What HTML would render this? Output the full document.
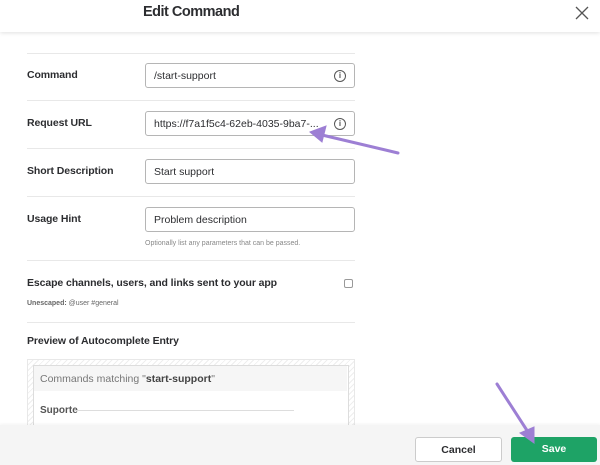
<!DOCTYPE html><html><head><style>
body{margin:0;width:600px;height:465px;overflow:hidden;background:#fff;font-family:"Liberation Sans",sans-serif;color:#2c2d30;position:relative}
.a{position:absolute}
.hdr{left:0;top:0;width:600px;height:32px;background:#fff;box-shadow:0 1px 4px rgba(0,0,0,.12)}
.line{left:27px;width:328px;height:1px;background:#e8e8e8}
.lbl{left:27px;font-size:10.5px;font-weight:bold;color:#2c2d30;letter-spacing:-0.1px}
.inp{left:145px;border:1px solid #b5b5b5;border-radius:3px;font-size:10.5px;line-height:24px;padding-left:8px;box-sizing:border-box;width:210px;height:25px}
.info{position:absolute;right:8px;top:6px;width:10px;height:10px;border:1px solid #555;border-radius:50%;font-size:8px;line-height:10px;text-align:center;font-weight:bold;color:#555}
.btn{top:437px;height:25px;border-radius:3px;font-size:10.5px;font-weight:bold;text-align:center;line-height:25px;box-sizing:border-box}
</style></head><body>
<div class="a line" style="top:53px"></div>
<div class="a lbl" style="top:69px">Command</div>
<div class="a inp" style="top:63px">/start-support<div class="info">i</div></div>
<div class="a line" style="top:100px"></div>
<div class="a lbl" style="top:117px">Request URL</div>
<div class="a inp" style="top:111px">https://f7a1f5c4-62eb-4035-9ba7-...<div class="info">i</div></div>
<div class="a line" style="top:148px"></div>
<div class="a lbl" style="top:165px">Short Description</div>
<div class="a inp" style="top:159px">Start support</div>
<div class="a line" style="top:196px"></div>
<div class="a lbl" style="top:213px">Usage Hint</div>
<div class="a inp" style="top:207px">Problem description</div>
<div class="a" style="left:145px;top:240px;font-size:7px;color:#888">Optionally list any parameters that can be passed.</div>
<div class="a line" style="top:260px"></div>
<div class="a lbl" style="top:277px">Escape channels, users, and links sent to your app</div>
<div class="a" style="left:344px;top:279px;width:7px;height:7px;border:1px solid #999;border-radius:2px"></div>
<div class="a" style="left:27px;top:300px;font-size:7px;color:#666"><b>Unescaped:</b> @user #general</div>
<div class="a line" style="top:322px"></div>
<div class="a lbl" style="top:335px">Preview of Autocomplete Entry</div>
<div class="a" style="left:27px;top:359px;width:326px;height:70px;border:1px solid #e8e8e8;background:repeating-linear-gradient(135deg,#fff 0 3px,#eee 3px 4px)"></div>
<div class="a" style="left:33px;top:365px;width:314px;height:70px;border:1px solid #ddd;background:#fff"></div>
<div class="a" style="left:34px;top:366px;width:313px;height:25px;background:#f6f6f6;font-size:10.5px;color:#777;line-height:26px;padding-left:6px;box-sizing:border-box">Commands matching "<b style="color:#444">start-support</b>"</div>
<div class="a" style="left:40px;top:405px;font-size:10px;font-weight:bold;color:#555">Suporte</div>
<div class="a" style="left:74px;top:410px;width:220px;height:1px;background:#ddd"></div>
<div class="a hdr"></div>
<div class="a" style="left:143px;top:4px;font-size:14.5px;font-weight:bold;color:#2c2d30;letter-spacing:-0.5px">Edit Command</div>
<svg class="a" style="left:574px;top:5px" width="16" height="16"><path d="M2 2L14 14M14 2L2 14" stroke="#555" stroke-width="1.3"/></svg>
<div class="a" style="left:0;top:425px;width:600px;height:40px;background:#f5f5f5;box-shadow:0 -1px 3px rgba(0,0,0,.05)"></div>
<div class="a btn" style="left:415px;width:87px;background:#fff;border:1px solid #ccc;color:#2c2d30">Cancel</div>
<div class="a btn" style="left:511px;width:86px;background:#1ea366;color:#fff">Save</div>
<svg class="a" style="left:0;top:0" width="600" height="465">
<g stroke="#9d7fd4" stroke-width="3" fill="#9d7fd4" stroke-linecap="round">
<line x1="398" y1="153" x2="322" y2="135"/><polygon points="310,132 326,126 322,142" stroke-width="1"/>
<line x1="497" y1="384" x2="528" y2="432"/><polygon points="534,443 520,433 534,427" stroke-width="1"/>
</g></svg>
</body></html>
